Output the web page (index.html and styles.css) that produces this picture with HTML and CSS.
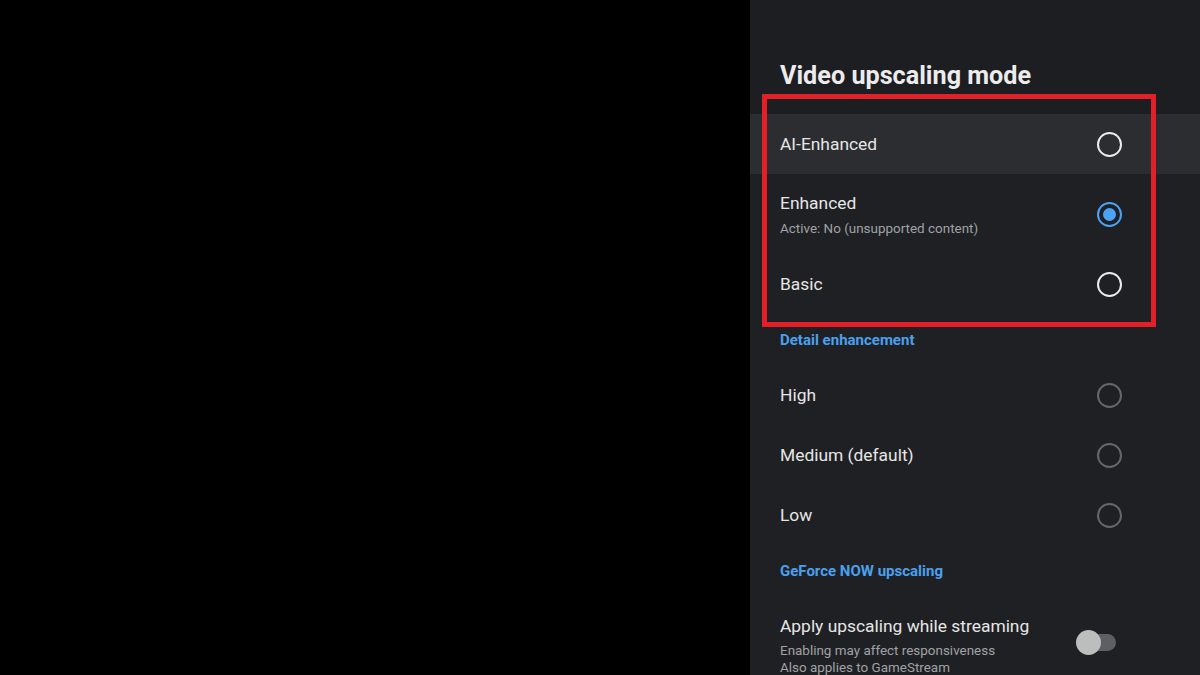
FILE: index.html
```html
<!DOCTYPE html>
<html>
<head>
<meta charset="utf-8">
<link rel="stylesheet" href="styles.css">
</head>
<body>
<div class="screen">
  <div class="video"></div>
  <aside class="panel">
    <header class="panel-head">
      <h1 class="title">Video upscaling mode</h1>
    </header>
    <div class="list">
      <div class="row row-focus">
        <div class="row-text"><div class="row-title">AI-Enhanced</div></div>
        <span class="radio"></span>
      </div>
      <div class="row row-tall">
        <div class="row-text">
          <div class="row-title">Enhanced</div>
          <div class="row-sub row-sub-first">Active: No (unsupported content)</div>
        </div>
        <span class="radio radio-on"></span>
      </div>
      <div class="row">
        <div class="row-text"><div class="row-title">Basic</div></div>
        <span class="radio"></span>
      </div>
      <div class="section section-first">Detail enhancement</div>
      <div class="row">
        <div class="row-text"><div class="row-title">High</div></div>
        <span class="radio radio-dim"></span>
      </div>
      <div class="row">
        <div class="row-text"><div class="row-title">Medium (default)</div></div>
        <span class="radio radio-dim"></span>
      </div>
      <div class="row">
        <div class="row-text"><div class="row-title">Low</div></div>
        <span class="radio radio-dim"></span>
      </div>
      <div class="section">GeForce NOW upscaling</div>
      <div class="row row-switch">
        <div class="row-text">
          <div class="row-title">Apply upscaling while streaming</div>
          <div class="row-sub row-sub-first">Enabling may affect responsiveness</div>
          <div class="row-sub">Also applies to GameStream</div>
        </div>
        <span class="switch"><span class="knob"></span></span>
      </div>
    </div>
    <div class="highlight-box"></div>
  </aside>
</div>
</body>
</html>
```

FILE: styles.css
```css
* { box-sizing: border-box; }
html, body { margin: 0; padding: 0; }
body {
  width: 1200px;
  height: 675px;
  overflow: hidden;
  background: #000;
  font-family: Roboto, "Noto Sans", sans-serif;
}
.screen {
  display: flex;
  width: 1200px;
  height: 675px;
}
.video {
  width: 750px;
  flex: none;
  background: #000;
}
.panel {
  position: relative;
  width: 450px;
  flex: none;
  background: #1f2023;
  overflow: hidden;
}
.panel-head {
  height: 114px;
  padding: 60px 0 0 30px;
  background: #1d1e21;
}
.title {
  margin: 0;
  font-size: 25.2px;
  line-height: 32px;
  font-weight: 700;
  color: #ececec;
}
.list {
  display: flex;
  flex-direction: column;
}
.row {
  height: 60px;
  display: flex;
  align-items: center;
  justify-content: space-between;
  padding: 0 78px 0 30px;
}
.row-focus { background: #2c2d30; }
.row-tall {
  height: 80px;
  align-items: flex-start;
  padding-top: 17px;
}
.row-tall .radio { align-self: center; margin-top: -17px; }
.row-switch {
  height: 80px;
  align-items: flex-start;
  padding-top: 17px;
  padding-right: 84px;
}
.row-title {
  font-size: 17.4px;
  line-height: 24px;
  color: #e6e6e6;
}
.row-sub {
  font-size: 13.45px;
  line-height: 17px;
  color: #a0a2a6;
}
.row-tall .row-sub-first { margin-top: 5px; }
.row-sub-first { margin-top: 4px; }
.section {
  height: 52px;
  display: flex;
  align-items: center;
  padding-left: 30px;
  font-size: 15px;
  font-weight: 700;
  color: #4aa0ee;
}
.section-first { height: 51px; }
.radio {
  flex: none;
  width: 25px;
  height: 25px;
  border-radius: 50%;
  border: 2px solid #ebebeb;
  display: flex;
  align-items: center;
  justify-content: center;
}
.radio-dim { border-color: #66676a; }
.radio-on { border-color: #4aa3f6; }
.radio-on::after {
  content: "";
  width: 13px;
  height: 13px;
  border-radius: 50%;
  background: #4aa3f6;
}
.switch {
  flex: none;
  position: relative;
  width: 36px;
  height: 17px;
  margin-top: 20px;
  border-radius: 9px;
  background: #5e5f62;
}
.knob {
  position: absolute;
  left: -4px;
  top: -4px;
  width: 25px;
  height: 25px;
  border-radius: 50%;
  background: #bdbdbd;
}
.highlight-box {
  position: absolute;
  left: 12px;
  top: 94px;
  width: 394px;
  height: 233px;
  border: 5px solid #e41f27;
  pointer-events: none;
}
```
